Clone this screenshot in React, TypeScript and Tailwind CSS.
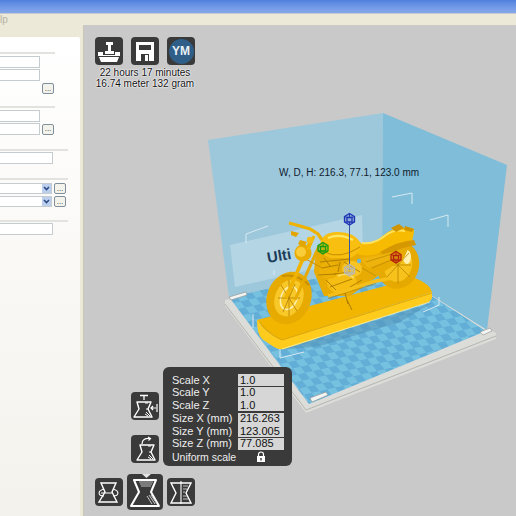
const sans = "font-['Liberation_Sans',Arial,sans-serif]";

function Sep({ className = "" }: { className?: string }) {
  return <div className={`h-[2px] w-[55px] bg-[#e2e2de] ${className}`} />;
}

function Field({ w, className = "" }: { w: string; className?: string }) {
  return <div className={`h-[12px] rounded-r-[1px] border border-l-0 border-[#c5ccd0] bg-white ${w} ${className}`} />;
}

function DotsButton({ className = "" }: { className?: string }) {
  return (
    <div className={`flex h-[11px] w-[12px] items-center justify-center rounded-[2px] border border-[#7f8f9c] bg-[#f3f3ec] text-[8px] leading-none text-[#333] ${sans} ${className}`}>
      ...
    </div>
  );
}

function SelectRow() {
  return (
    <div className="flex items-center gap-[2px]">
      <div className="flex h-[11px] w-[52px] justify-end border-y border-r border-[#c5ccd0] bg-white">
        <div className="flex w-[9px] items-center justify-center bg-[#bcd0ee]">
          <svg width="7" height="5" viewBox="0 0 7 5">
            <path d="M1 1l2.5 2.5L6 1" fill="none" stroke="#2c4a86" strokeWidth="1.6" />
          </svg>
        </div>
      </div>
      <DotsButton />
    </div>
  );
}

function LeftPanel() {
  return (
    <div className="flex w-[84px] flex-col border-r border-[#c9c6b6] bg-[#ece9d8] pr-[3px] pt-[12px]">
      <div className="flex h-full w-[80px] flex-col rounded-tr-[2px] bg-gradient-to-b from-white to-[#f4f2ec] pt-[15px]">
        <Sep />
        <Field w="w-[40px]" className="mt-[2px]" />
        <Field w="w-[40px]" className="mt-[1px]" />
        <DotsButton className="ml-[42px] mt-[2px]" />
        <Sep className="mt-[12px]" />
        <Field w="w-[40px]" className="mt-[2px]" />
        <div className="mt-[1px] flex items-center gap-[2px]">
          <Field w="w-[40px]" />
          <DotsButton />
        </div>
        <Sep className="mt-[14px] w-[68px]" />
        <Field w="w-[53px]" className="mt-[1px]" />
        <Sep className="mt-[14px] w-[68px]" />
        <div className="mt-[3px] flex flex-col gap-[2px]">
          <SelectRow />
          <SelectRow />
        </div>
        <Sep className="mt-[13px] w-[68px]" />
        <Field w="w-[53px]" className="mt-[1px]" />
      </div>
    </div>
  );
}

function Gizmo({ x, y, color }: { x: number; y: number; color: string }) {
  return (
    <g transform={`translate(${x} ${y})`} fill="none" stroke={color} strokeWidth="1.3">
      <path d="M-5 -2.5L0 -5.5L5 -2.5V3L0 6L-5 3Z" fill={color} fillOpacity="0.25" />
      <path d="M-2.5 -1.5L2.5 -1.5L2.5 3L-2.5 3Z" />
      <path d="M-5 -2.5L-2.5 -1.5M5 -2.5L2.5 -1.5M5 3L2.5 3M-5 3L-2.5 3M0 -5.5V-1.5M0 6V3" strokeWidth="0.9" />
    </g>
  );
}

function Motorcycle() {
  return (
    <g>
      {/* base: top face, then front side */}
      <path d="M257 320L415 278Q430 284 432 292L282 340Q266 334 257 320Z" fill="#f2b600" />
      <path d="M257 320Q266 334 282 340L432 292L432 298Q431 301 426 303L284 349Q279 350 274 347L262 339Q257 334 257 320Z" fill="#ffcb1c" />
      <path d="M282 349L430 302" fill="none" stroke="#fff2a8" strokeWidth="0.8" />
      <path d="M260 322Q268 334 282 340L432 293" fill="none" stroke="#dba000" strokeWidth="0.8" />
      {/* rear wheel */}
      <ellipse cx="398" cy="265" rx="21" ry="24" transform="rotate(15 398 265)" fill="#e6a900" />
      <ellipse cx="398" cy="265" rx="14" ry="17" transform="rotate(15 398 265)" fill="#f7c21c" />
      <ellipse cx="407" cy="257" rx="4" ry="7" fill="#fff0b0" />
      <path d="M387 254L410 277M387 277L409 253M398 247V284M385 265H411" stroke="#b98500" strokeWidth="0.8" />
      {/* frame mass */}
      <path d="M316 250L362 248L412 240L404 258L378 276L350 296L324 296L314 272Z" fill="#e8ab04" />
      {/* rear fender + seat */}
      <path d="M358 243Q372 246 384 235Q394 226 407 228Q415 227 414 232L412 242Q396 244 382 252Q368 258 358 254Z" fill="#f7bc02" />
      <path d="M362 243Q374 245 386 235Q394 229 405 231" fill="none" stroke="#ffe25a" strokeWidth="2" />
      <path d="M380 252Q398 241 414 240L416 245Q400 247 386 257Z" fill="#d59800" />
      <path d="M391 228L399 224L404 228L396 232Z M405 226l9 3 -2 3 -8 -2Z" fill="#cf9400" />
      {/* tank */}
      <path d="M320 247Q320 233 336 232Q353 231 361 243Q361 254 350 258L330 258Q320 254 320 247Z" fill="#f8bf10" />
      <path d="M328 238Q340 233 353 240" fill="none" stroke="#ffe768" strokeWidth="2.2" />
      <path d="M324 252Q340 260 360 247" fill="none" stroke="#c48c00" strokeWidth="1" />
      {/* engine */}
      <ellipse cx="342" cy="283" rx="15" ry="11" fill="#f6bd12" />
      <ellipse cx="329" cy="270" rx="10" ry="9" fill="#ecb006" />
      <ellipse cx="352" cy="269" rx="10" ry="8" fill="#f8c424" />
      <path d="M320 262L350 259M322 268L338 265M318 275L336 274M330 287L352 279M344 262L360 272M334 274L350 272M350 287L362 280M326 280L336 290M340 262L338 272M324 258L330 266" stroke="#a87a00" strokeWidth="0.9" />
      <path d="M338 276Q346 272 354 278" fill="none" stroke="#ffe26a" strokeWidth="1.4" />
      <path d="M360 258Q378 256 392 252L400 256L368 268Z" fill="#eeb30c" />
      <path d="M366 262L392 254M372 268L396 258M362 268L376 276" stroke="#b98500" strokeWidth="0.7" />
      <path d="M328 296L376 281L392 278" fill="none" stroke="#f6bf1a" strokeWidth="3.4" />
      <path d="M328 298.5L376 283.5" fill="none" stroke="#a87a00" strokeWidth="0.6" />
      <path d="M345 293L348 304M347 300L352 310" stroke="#a87a00" strokeWidth="1" />
      <circle cx="359" cy="261" r="2.2" fill="#6fb6d6" />
      {/* front wheel */}
      <ellipse cx="289" cy="298" rx="22" ry="27" transform="rotate(22 289 298)" fill="#e7aa00" />
      <ellipse cx="289" cy="298" rx="14" ry="19" transform="rotate(22 289 298)" fill="#f8c728" />
      <ellipse cx="289" cy="298" rx="8" ry="12" transform="rotate(22 289 298)" fill="none" stroke="#fff0b0" strokeWidth="1.6" />
      <path d="M281 285L297 311M278 298L300 298M295 284L283 312M289 280V316" stroke="#b07f00" strokeWidth="0.8" />
      <path d="M282 276Q297 273 309 285" fill="none" stroke="#c89000" strokeWidth="2" />
      {/* forks */}
      <path d="M311 240L286 298" stroke="#f0b400" strokeWidth="3.6" />
      <path d="M319 246L295 300" stroke="#e6aa00" strokeWidth="3" />
      <path d="M304 258L322 268" stroke="#c89000" strokeWidth="1" />
      {/* headlight and bars */}
      <circle cx="303" cy="253" r="8.5" fill="#e9ad02" />
      <circle cx="301" cy="252" r="5" fill="#f9cc3a" />
      <path d="M289 223L300 226L310 229L318 234L322 240" fill="none" stroke="#eeb200" strokeWidth="3.2" />
      <path d="M291 231L299 233L296 237L291 235Z M300 240l7 2 -3 5 -6 -3Z" fill="#e3a600" />
      <path d="M314 236L308 250" stroke="#f0b400" strokeWidth="3" />
      <circle cx="310" cy="240" r="3.2" fill="#f3bb14" />
    </g>
  );
}

function Scene() {
  return (
    <svg className="absolute inset-0 h-full w-full" viewBox="84 25 432 491">
      <defs>
        <pattern
          id="floorCheck"
          width="10"
          height="10"
          patternUnits="userSpaceOnUse"
          patternTransform="matrix(1.55 -0.35 0.95 1.22 228 297)"
        >
          <rect width="10" height="10" fill="#76c0e0" />
          <rect width="5" height="5" fill="#62aed6" />
          <rect x="5" y="5" width="5" height="5" fill="#62aed6" />
        </pattern>
      </defs>
      {/* plate */}
      <path d="M225 300L381 266L496 333L496 339L306 413L225 306Z" fill="#dcdcd8" />
      <path d="M225 304L306 410L496 336" fill="none" stroke="#b5b5b2" strokeWidth="1" />
      {/* floor */}
      <path d="M229 297L382 264L486 331L309 404Z" fill="url(#floorCheck)" />
      {/* walls */}
      <path d="M208 140L383 113L382 264L229 297Z" fill="#9dc8dc" />
      <path d="M383 113L507 165L487 330L382 264Z" fill="#7fbdd8" />
      {/* back plate text */}
      <path d="M230 245L362 215L363 258L235 287Z" fill="#b4d5e4" />
      <text x="268" y="263" transform="rotate(-10 268 263)" className={`${sans} fill-[#1d3c58] text-[15px] font-bold`}>
        Ulti
      </text>
      {/* brackets */}
      <g fill="none" stroke="#d7e9f1" strokeWidth="1">
        <path d="M246 243V234L268 226" />
        <path d="M392 197L412 193V204" />
        <path d="M430 220L448 215V227" />
        <path d="M274 270V275" />
        <path d="M439 297V305L423 312" />
        <path d="M280 340V358L304 352" />
        <path d="M253 314V328" />
      </g>
      {/* shadow under the base */}
      <path d="M280 350L432 303L400 322L320 346Z" fill="#4f8fb4" fillOpacity="0.5" />
      {/* plate clips */}
      <path d="M229 297L246 292L247 295L231 300Z M310 398L326 392L328 395L312 402Z M480 332L490 328L492 331L483 335Z" fill="#f4f4f2" stroke="#8f8f8c" strokeWidth="0.6" />
      <Motorcycle />
      <path d="M349.5 224V270" stroke="#3857a8" strokeWidth="1" />
      <Gizmo x={349.5} y={219} color="#1f35b5" />
      <Gizmo x={323} y={248} color="#149c14" />
      <Gizmo x={396} y={257} color="#b02010" />
      <Gizmo x={349.5} y={270} color="#b9b9b0" />
    </svg>
  );
}

function Tile({ size = "w-[28px] h-[28px]", children }: { size?: string; children: React.ReactNode }) {
  return <div className={`flex items-center justify-center rounded-[4px] bg-[#3a3a3a] ${size}`}>{children}</div>;
}

function Hourglass({ hatch = true }: { hatch?: boolean }) {
  return (
    <g fill="none" stroke="#fff" strokeWidth="1.4" strokeLinejoin="round">
      <path d="M6 10H20L17 17L21 25H3L8 17Z" />
      {hatch && <path d="M14 11L17 11M15 17L17 17M15 20L19 24M14 22L17 24" strokeWidth="1" />}
    </g>
  );
}

function ScaleIcon() {
  return (
    <svg width="28" height="28" viewBox="0 0 28 28">
      <Hourglass />
      <path d="M9 3.5H17M13 3.5V8" stroke="#fff" strokeWidth="1.3" fill="none" />
      <path d="M26 12V20M25 16H20M22 14L20 16L22 18" stroke="#fff" strokeWidth="1.2" fill="none" />
    </svg>
  );
}

function MirrorIcon() {
  return (
    <svg width="28" height="28" viewBox="0 0 28 28">
      <g transform="translate(3 0)">
        <Hourglass />
      </g>
      <path d="M11 9C11 5 14 3 19 3.5M17 2L19.5 3.5L17.5 5.5" stroke="#fff" strokeWidth="1.2" fill="none" />
    </svg>
  );
}

function RotateIcon() {
  return (
    <svg width="28" height="28" viewBox="0 0 28 28">
      <path d="M6 5H21L17 14L22 24H4L10 14Z" fill="none" stroke="#fff" strokeWidth="1.4" />
      <path d="M6 15H18" stroke="#fff" strokeWidth="1" />
      <path d="M9 11C2 13 3 18 9 18M18 11C25 13 24 18 18 18" fill="none" stroke="#fff" strokeWidth="1.1" />
    </svg>
  );
}

function BigScaleIcon() {
  return (
    <svg width="36" height="36" viewBox="0 0 36 36">
      <path d="M7 6H29L24 18L32 32H4L12 18Z" fill="none" stroke="#fff" strokeWidth="2" strokeLinejoin="round" />
      <path d="M12 8H26M13 10H25M14 12H24" stroke="#bdbdbd" strokeWidth="1" />
      <path d="M22 21L28 30M24 21L30 30M20 22L25 30" stroke="#c8c8c8" strokeWidth="1" />
      <path d="M15 0H24L19.5 4Z" fill="#e6e6e6" />
    </svg>
  );
}

function MirrorYIcon() {
  return (
    <svg width="28" height="28" viewBox="0 0 28 28">
      <path d="M4 5H24L19 15L24 25H4L9 15Z" fill="none" stroke="#fff" strokeWidth="1.4" />
      <path d="M14 3V26" stroke="#fff" strokeWidth="1.1" />
      <path d="M16 8H21M16 11H20M16 14H18M16 18H20M16 21H21" stroke="#c0c0c0" strokeWidth="1" />
    </svg>
  );
}

function LoadIcon() {
  return (
    <svg width="28" height="28" viewBox="0 0 28 28">
      <path d="M11 5H18V8H16V14H19V17H10V14H13V8H11Z" fill="#fff" />
      <path d="M3 15H8V18H20V15H25V19H3Z M4 20H24L22 25H6Z" fill="#fff" />
    </svg>
  );
}

function SaveIcon() {
  return (
    <svg width="28" height="28" viewBox="0 0 28 28">
      <path d="M5 5H23V24H5Z M8 8V13H20V8Z M10 17V24H18V17Z" fill="#fff" fillRule="evenodd" />
      <path d="M14 18H17V24H14Z" fill="#fff" />
    </svg>
  );
}

const rows = [
  ["Scale X", "1.0"],
  ["Scale Y", "1.0"],
  ["Scale Z", "1.0"],
];
const sizeRows = [
  ["Size X (mm)", "216.263"],
  ["Size Y (mm)", "123.005"],
  ["Size Z (mm)", "77.085"],
];

function ScaleRow({ label, value }: { label: string; value: string }) {
  return (
    <div className="flex h-[12.5px] items-center">
      <span className="w-[66px] text-[11px] leading-none text-[#eee]">{label}</span>
      <span className="flex h-[12px] w-[46px] items-center bg-[#d6d6d6] pl-[2px] text-[11px] leading-none text-[#111]">{value}</span>
    </div>
  );
}

function ScalePanel() {
  return (
    <div className={`flex h-[99px] w-[129px] flex-col rounded-[6px] bg-[#3a3a3a] pl-[9px] pt-[7px] ${sans}`}>
      {rows.map(([l, v]) => (
        <ScaleRow key={l} label={l} value={v} />
      ))}
      <div className="h-[1px]" />
      {sizeRows.map(([l, v]) => (
        <ScaleRow key={l} label={l} value={v} />
      ))}
      <div className="flex h-[14px] items-center">
        <span className="w-[84px] text-[10.5px] leading-none text-[#eee]">Uniform scale</span>
        <svg width="10" height="12" viewBox="0 0 10 12">
          <path d="M2.5 5V3.5a2.5 2.5 0 0 1 5 0V5" fill="none" stroke="#fff" strokeWidth="1.2" />
          <path d="M1 5H9V11H1Z" fill="#fff" />
          <rect x="4.3" y="7" width="1.4" height="2.5" fill="#3a3a3a" />
        </svg>
      </div>
    </div>
  );
}

export default function App() {
  return (
    <div className={`flex h-[516px] w-[516px] flex-col overflow-hidden bg-[#c9c9c9] ${sans}`}>
      <div className="h-[13px] bg-gradient-to-b from-[#4f7fdc] via-[#6f97e6] to-[#86a8ea]" />
      <div className="flex h-[12px] items-center border-t border-[#c8c8d0] bg-[#ece9d8] text-[10px] leading-none text-[#b5b3a5]">
        lp
      </div>
      <div className="flex flex-1">
        <LeftPanel />
        <div className="relative flex-1 bg-[#c9c9c9]">
          <Scene />
          <div className="absolute left-[11px] top-[12px] flex gap-[8px]">
            <Tile><LoadIcon /></Tile>
            <Tile><SaveIcon /></Tile>
            <Tile>
              <div className="flex h-[25px] w-[25px] items-center justify-center rounded-full bg-[#2f5f88] text-[12px] font-bold text-[#e8f0f5]">YM</div>
            </Tile>
          </div>
          <div className="absolute left-[11px] top-[42px] w-[100px] text-center text-[10px] leading-[11px] text-[#111] [text-shadow:0_0_1px_#fff,0_0_2px_#fff,0_0_2px_#fff]">
            <div>22 hours 17 minutes</div>
            <div className="whitespace-nowrap">16.74 meter 132 gram</div>
          </div>
          <div className="absolute left-[195px] top-[143px] whitespace-nowrap text-[10px] leading-none text-[#10202c]">
            W, D, H: 216.3, 77.1, 123.0 mm
          </div>
          <div className="absolute left-[79px] top-[342px]">
            <ScalePanel />
          </div>
          <div className="absolute left-[47px] top-[367px] flex flex-col gap-[15px]">
            <Tile><ScaleIcon /></Tile>
            <Tile><MirrorIcon /></Tile>
          </div>
          <div className="absolute left-[11px] top-[449px] flex items-center gap-[4px]">
            <Tile><RotateIcon /></Tile>
            <Tile size="w-[36px] h-[36px]"><BigScaleIcon /></Tile>
            <Tile><MirrorYIcon /></Tile>
          </div>
        </div>
      </div>
    </div>
  );
}
